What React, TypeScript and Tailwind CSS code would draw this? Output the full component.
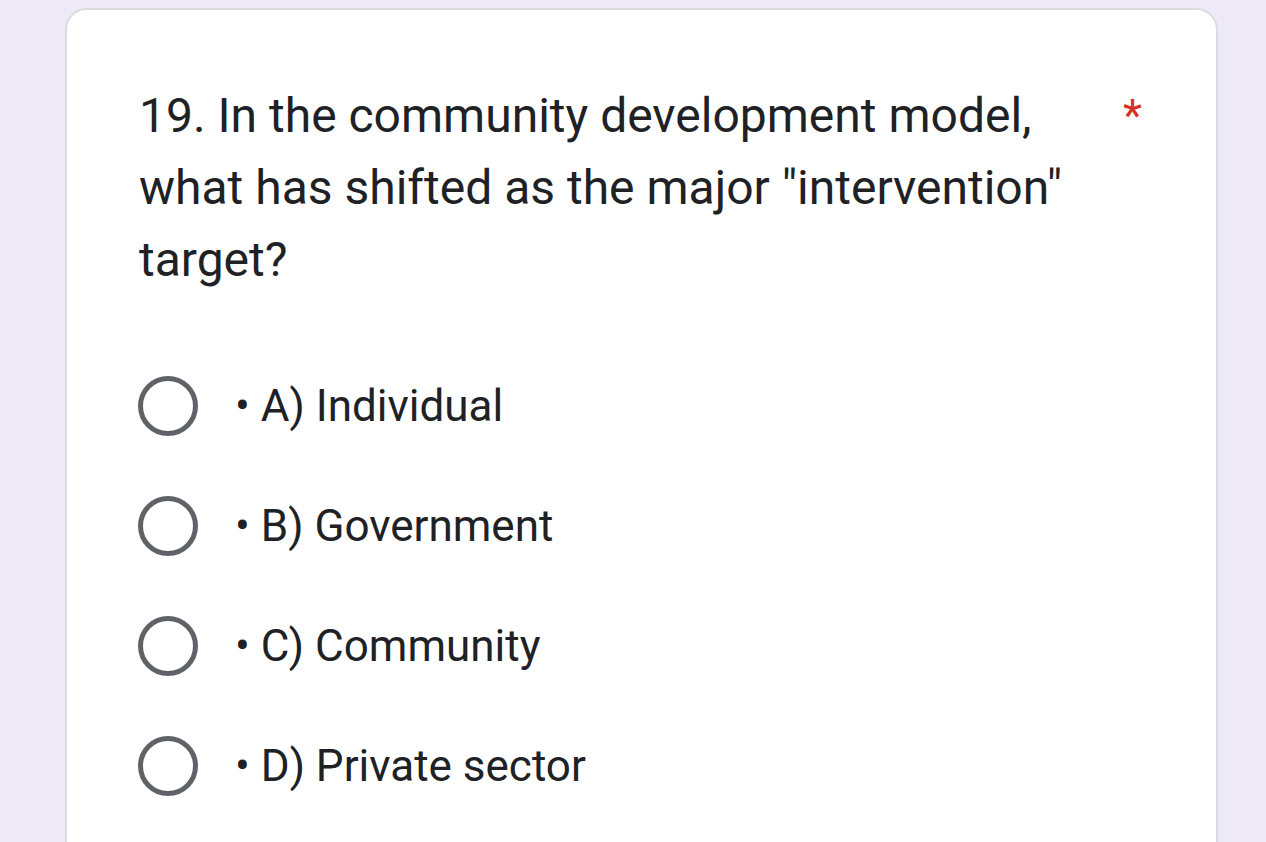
import React, { useState } from 'react';

const OPTIONS = ['A) Individual', 'B) Government', 'C) Community', 'D) Private sector'];

export default function App() {
  const [selected, setSelected] = useState<number | null>(null);

  return (
    <div className="min-h-[842px] bg-[#ede9f6] pt-[8px] pl-[65px] overflow-hidden" style={{ fontFamily: 'Roboto, "Noto Sans", sans-serif' }}>
      <div className="w-[1153px] h-[860px] bg-white border-2 border-[#dadce0] rounded-[22px] pl-[72px] pr-[74px] pt-[70px]">
        <div className="flex items-start">
          <div className="flex-1 pr-[40px] text-[48px] leading-[72px] text-[#202124]">
            19. In the community development model, what has shifted as the major "intervention" target?
          </div>
          <span className="text-[44px] leading-[72px] text-[#d93025]">*</span>
        </div>

        <div className="mt-[50px] flex flex-col">
          {OPTIONS.map((opt, i) => (
            <button
              key={opt}
              onClick={() => setSelected(i)}
              className="flex h-[120px] items-center text-left"
            >
              <span className="flex h-[60px] w-[60px] items-center justify-center rounded-full border-[5px] border-[#5f6368] -ml-[1px]">
                {selected === i && <span className="h-[30px] w-[30px] rounded-full bg-[#673ab7]" />}
              </span>
              <span className="ml-[37px] text-[44px] leading-none text-[#202124]">• {opt}</span>
            </button>
          ))}
        </div>
      </div>
    </div>
  );
}
